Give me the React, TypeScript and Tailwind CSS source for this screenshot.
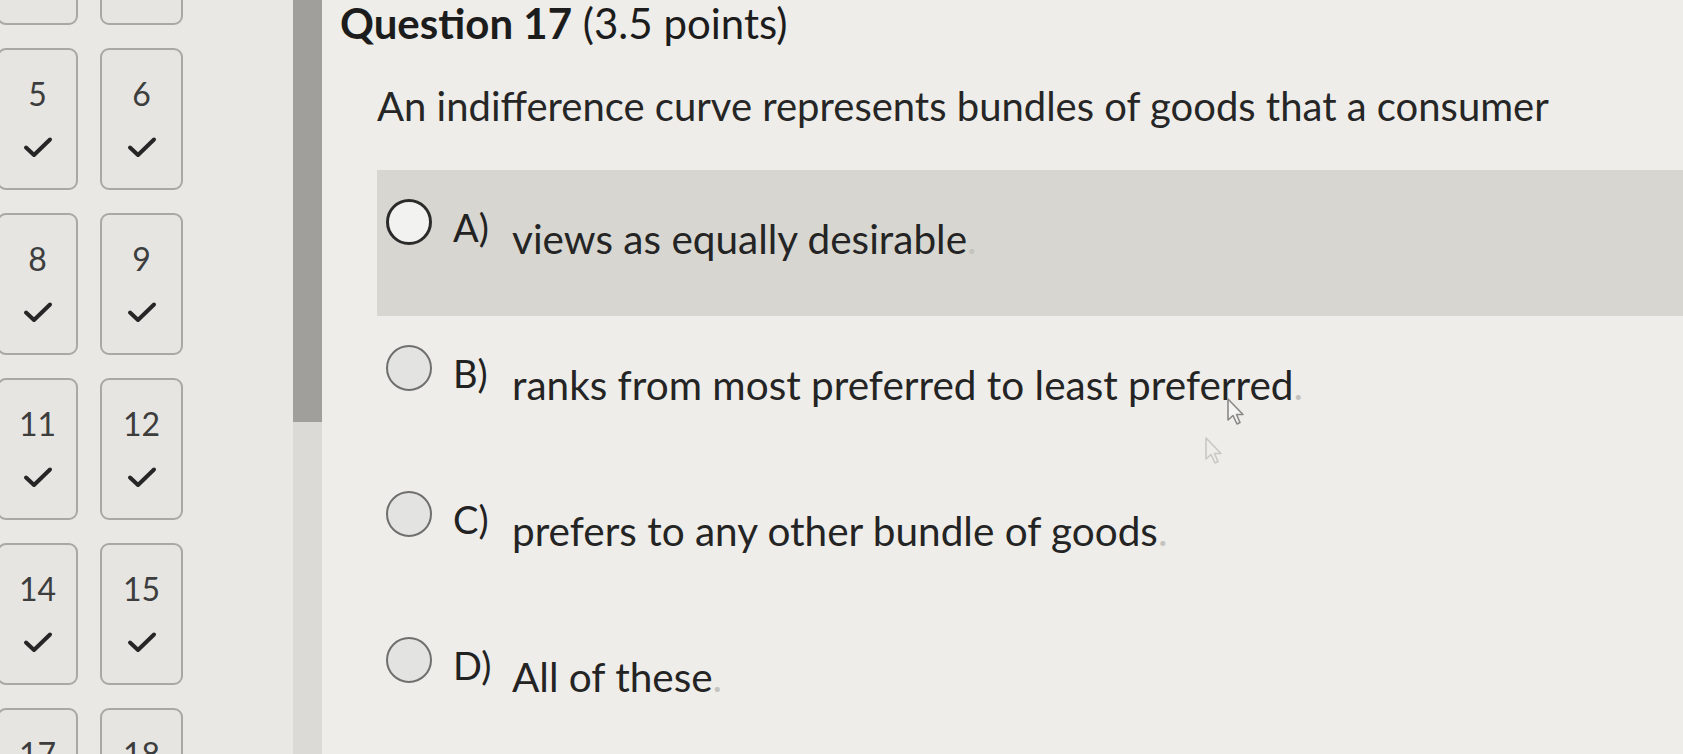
import React from 'react';

const tileRows = [
  ['2', '3'],
  ['5', '6'],
  ['8', '9'],
  ['11', '12'],
  ['14', '15'],
  ['17', '18'],
];

const options = [
  { label: 'A)', text: 'views as equally desirable', active: true },
  { label: 'B)', text: 'ranks from most preferred to least preferred', active: false },
  { label: 'C)', text: 'prefers to any other bundle of goods', active: false },
  { label: 'D)', text: 'All of these', active: false },
];

const Check: React.FC = () => (
  <svg width="30" height="22" viewBox="0 0 30 22" fill="none">
    <path d="M3 11.5 L11 19 L27 3.5" stroke="#262626" strokeWidth="4" strokeLinecap="round" strokeLinejoin="round" />
  </svg>
);

const Tile: React.FC<{ num: string; hidden?: boolean }> = ({ num, hidden }) => (
  <div className="h-[142px] rounded-[9px] border-2 border-[#a9a8a5] bg-[#e6e5e2] flex flex-col items-center">
    {!hidden && (
      <>
        <div className="mt-[28px] text-[32px] leading-none text-[#3d3d3d]">{num}</div>
        <div className="mt-[26px]">
          <Check />
        </div>
      </>
    )}
  </div>
);

const Cursor: React.FC<{ className: string; faint?: boolean }> = ({ className, faint }) => (
  <svg className={className} width="22" height="30" viewBox="0 0 22 30" fill="none">
    <path
      d="M2 2 L2 23 L7 18.5 L11 27 L14 25.5 L10.5 17.5 L17 17.5 Z"
      fill={faint ? 'none' : '#f4f4f2'}
      stroke={faint ? '#c9c8c4' : '#8a8986'}
      strokeWidth="1.6"
      strokeLinejoin="round"
    />
  </svg>
);

export default function App() {
  return (
    <div className="relative flex h-[754px] w-[1683px] overflow-hidden bg-[#eeede9] font-['Lato','Noto_Sans',sans-serif] text-[#232323]">
      {/* question list sidebar */}
      <aside className="w-[293px] shrink-0 overflow-hidden bg-[#e9e8e4]">
        <div className="ml-[-3px] mt-[-117px] grid grid-cols-[81px_83px] gap-x-[22px] gap-y-[23px]">
          {tileRows.map((row, i) =>
            row.map((n) => <Tile key={n} num={n} hidden={i === 0} />)
          )}
        </div>
      </aside>

      {/* scrollbar */}
      <div className="flex w-[29px] shrink-0 flex-col">
        <div className="h-[422px] bg-[#a19f9b]" />
        <div className="flex-1 bg-[#dbdad6]" />
      </div>

      {/* question */}
      <main className="flex-1 pl-[18px]">
        <h2 className="h-[44px] pt-[4px] text-[42px] leading-[0.94] text-[#1c1c1c]">
          <span className="font-bold">Question 17</span> <span>(3.5 points)</span>
        </h2>
        <p className="ml-[37px] mt-[42px] text-[40px] leading-none text-[#262626]">
          An indifference curve represents bundles of goods that a consumer
        </p>
        <div className="ml-[37px] mt-[44px]">
          {options.map((o) => (
            <div
              key={o.label}
              className={`flex h-[146px] items-start pl-[9px] ${o.active ? 'bg-[#d7d6d1]' : ''}`}
            >
              <div
                className={`mt-[29px] h-[46px] w-[46px] shrink-0 rounded-full ${
                  o.active ? 'border-[3px] border-[#2b2b2b] bg-[#f2f2f0]' : 'border-[2.5px] border-[#6f6f6d] bg-[#e3e3e1]'
                }`}
              />
              <div className="ml-[21px] mt-[38px] w-[59px] shrink-0 text-[38px] leading-none text-[#222]">{o.label}</div>
              <div className="mt-[49px] text-[40.5px] leading-none text-[#242424]">
                {o.text}
                <span className="text-[#c4c3bf]">.</span>
              </div>
            </div>
          ))}
        </div>
      </main>

      <Cursor className="absolute left-[1226px] top-[397px]" />
      <Cursor className="absolute left-[1204px] top-[436px]" faint />
    </div>
  );
}
